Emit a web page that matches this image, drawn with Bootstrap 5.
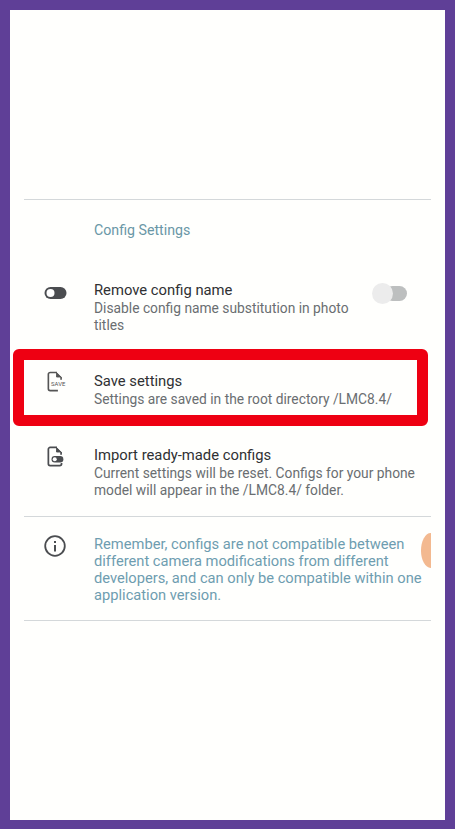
<!DOCTYPE html>
<html lang="en">
<head>
<meta charset="utf-8">
<title>Config Settings</title>
<link href="https://cdn.jsdelivr.net/npm/bootstrap@5.3.0/dist/css/bootstrap.min.css" rel="stylesheet">
<style>
html, body { height: 100%; }
body { background: #5f3f97; font-family: Roboto, "Liberation Sans", sans-serif; overflow: hidden; }
.frame-page { position: relative; height: 810px; margin: 10px; background: #fffffd; padding: 189px 14px 0; }
.rule-line { height: 1px; background: #d4d8da; }
.section-title { height: 60px; padding-left: 70px; padding-top: 1px; font-size: 14.2px; color: #6a97a6; display: flex; align-items: center; }
.set-row { display: flex; }
.icon-cell { width: 70px; flex: none; padding-left: 20px; }
.file-icon { display: block; margin-left: 3px; }
.row-title { font-size: 14.8px; line-height: 19px; color: #2f3133; }
.row-sub { font-size: 13.8px; line-height: 17px; color: #6a6e71; }
.row-remove { height: 69px; margin-top: 20px; padding-top: 1px; }
.row-remove .row-sub { width: 270px; }
.row-save { height: 77px; margin: 0 3px 0 -11px; border: 11px solid #ee0012; border-radius: 6px; }
.row-save .file-icon { margin-top: 11px; }
.row-save .row-title { margin-top: 12px; }
.row-import { height: 90px; padding-top: 20px; }
.info-block { height: 103px; padding-top: 19px; }
.info-block .icon-cell svg { margin-top: -1px; }
.info-text { font-size: 14.7px; line-height: 17px; color: #6e9db0; width: 335px; }
.switch-track { position: absolute; left: 375px; top: 276px; width: 22px; height: 15px; border-radius: 8px; background: #bdbfbf; }
.switch-thumb { position: absolute; left: 362px; top: 273px; width: 21px; height: 21px; border-radius: 50%; background: #ececec; }
.peach-blob { position: absolute; left: 411px; top: 523px; width: 10px; height: 35px; border-radius: 10px 0 0 10px / 18px 0 0 18px; background: #f3b990; }
</style>
</head>
<body>
<div class="frame-page">
  <div class="rule-line"></div>
  <div class="section-title">Config Settings</div>

  <div class="set-row row-remove">
    <div class="icon-cell">
      <svg width="24" height="16" viewBox="0 0 24 16" class="d-block mt-1"><rect x="0.5" y="2" width="22" height="12" rx="6" fill="#4b4d50"/><circle cx="6.5" cy="8" r="4" fill="#fff"/></svg>
    </div>
    <div>
      <div class="row-title">Remove config name</div>
      <div class="row-sub">Disable config name substitution in photo titles</div>
    </div>
  </div>

  <div class="set-row row-save">
    <div class="icon-cell">
      <svg width="20" height="22" viewBox="0 0 22 24" class="file-icon" fill="none"><path d="M11 1.5H3.5a2 2 0 0 0-2 2v16a2 2 0 0 0 2 2H12" stroke="#555" stroke-width="1.8"/><path d="M10.5 1.5v5h5l-5-5z" fill="#555" stroke="#555"/><path d="M15.5 6.5v3" stroke="#555" stroke-width="1.8"/><text x="4.5" y="16" font-size="6.5" font-family="Roboto, sans-serif" fill="#555">SAVE</text></svg>
    </div>
    <div>
      <div class="row-title">Save settings</div>
      <div class="row-sub">Settings are saved in the root directory /LMC8.4/</div>
    </div>
  </div>

  <div class="set-row row-import">
    <div class="icon-cell">
      <svg width="20" height="22" viewBox="0 0 22 24" class="file-icon" fill="none"><path d="M11 1.5H3.5a2 2 0 0 0-2 2v16a2 2 0 0 0 2 2H14a2 2 0 0 0 2-2v-1" stroke="#4b4d50" stroke-width="1.9"/><path d="M10.5 1.5v5h5l-5-5z" fill="#4b4d50" stroke="#4b4d50"/><path d="M15.5 6.5v3" stroke="#4b4d50" stroke-width="1.9"/><rect x="5" y="11" width="13" height="7" rx="3.5" fill="#4b4d50"/><circle cx="8.5" cy="14.5" r="2.2" fill="#fff"/></svg>
    </div>
    <div>
      <div class="row-title">Import ready-made configs</div>
      <div class="row-sub">Current settings will be reset. Configs for your phone model will appear in the /LMC8.4/ folder.</div>
    </div>
  </div>

  <div class="rule-line"></div>

  <div class="set-row info-block">
    <div class="icon-cell">
      <svg width="24" height="24" viewBox="0 0 24 24" class="d-block" fill="none"><circle cx="11" cy="11" r="9.8" stroke="#4b4d50" stroke-width="1.8"/><rect x="10" y="10" width="2" height="6.5" fill="#4b4d50"/><rect x="10" y="6" width="2" height="2" fill="#4b4d50"/></svg>
    </div>
    <div class="info-text">Remember, configs are not compatible between different camera modifications from different developers, and can only be compatible within one application version.</div>
  </div>

  <div class="rule-line"></div>

  <div class="switch-track"></div>
  <div class="switch-thumb"></div>
  <div class="peach-blob"></div>
</div>
<script src="https://cdn.jsdelivr.net/npm/bootstrap@5.3.0/dist/js/bootstrap.bundle.min.js"></script>
</body>
</html>
